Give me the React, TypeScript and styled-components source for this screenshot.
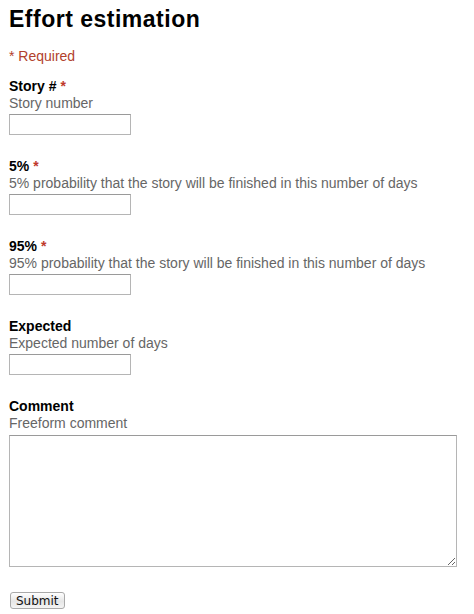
import React from "react";
import styled, { createGlobalStyle } from "styled-components";

const Global = createGlobalStyle`
  html, body { margin: 0; padding: 0; background: #fff; }
  body { font-family: "Liberation Sans", Arial, sans-serif; }
`;

const Page = styled.form`
  display: flex;
  flex-direction: column;
  padding: 8px 9px 0 9px;
  width: 448px;
`;

const Title = styled.h1`
  margin: 0;
  font-size: 23px;
  line-height: 22px;
  letter-spacing: 0.5px;
  font-weight: bold;
  color: #000;
`;

const RequiredNote = styled.div`
  margin-top: 18px;
  font-size: 14px;
  line-height: 17px;
  color: #b2412c;
`;

const Fields = styled.div`
  display: flex;
  flex-direction: column;
  gap: 23px;
  margin-top: 13px;
`;

const Field = styled.div`
  display: flex;
  flex-direction: column;
`;

const Label = styled.label`
  font-size: 14px;
  line-height: 17px;
  font-weight: bold;
  color: #000;
`;

const Star = styled.span`
  color: #c0392b;
  font-weight: bold;
  margin-left: 4px;
`;

const Help = styled.div`
  font-size: 14px;
  line-height: 17px;
  color: #666;
`;

const TextInput = styled.input`
  box-sizing: border-box;
  margin-top: 2px;
  width: 122px;
  height: 21px;
  border: 1px solid #b5b5b5;
  border-top-color: #9a9a9a;
  background: #fff;
  padding: 0 3px;
  font: 13px "Liberation Sans", Arial, sans-serif;
`;

const TextArea = styled.textarea`
  box-sizing: border-box;
  margin-top: 3px;
  width: 448px;
  height: 132px;
  border: 1px solid #b5b5b5;
  border-top-color: #9a9a9a;
  background: #fff;
  resize: both;
  font: 13px "Liberation Sans", Arial, sans-serif;
`;

const SubmitRow = styled.div`
  display: flex;
  margin-top: 25px;
  padding-left: 1px;
`;

const SubmitButton = styled.button`
  box-sizing: border-box;
  height: 17px;
  padding: 0 5px;
  border: 1px solid #a9a9a9;
  border-radius: 3px;
  background: linear-gradient(#ffffff, #e6e6e6 55%, #f4f4f4);
  font-family: "DejaVu Sans", sans-serif;
  font-size: 12px;
  line-height: 14px;
  color: #111;
`;

const fields = [
  { id: "story", label: "Story #", help: "Story number", required: true },
  { id: "p5", label: "5%", help: "5% probability that the story will be finished in this number of days", required: true },
  { id: "p95", label: "95%", help: "95% probability that the story will be finished in this number of days", required: true },
  { id: "expected", label: "Expected", help: "Expected number of days", required: false },
];

export default function App() {
  return (
    <>
      <Global />
      <Page onSubmit={(e) => e.preventDefault()}>
        <Title>Effort estimation</Title>
        <RequiredNote>* Required</RequiredNote>
        <Fields>
          {fields.map((f) => (
            <Field key={f.id}>
              <Label htmlFor={f.id}>
                {f.label}
                {f.required && <Star>*</Star>}
              </Label>
              <Help>{f.help}</Help>
              <TextInput id={f.id} type="text" />
            </Field>
          ))}
          <Field>
            <Label htmlFor="comment">Comment</Label>
            <Help>Freeform comment</Help>
            <TextArea id="comment" />
          </Field>
        </Fields>
        <SubmitRow>
          <SubmitButton type="submit">Submit</SubmitButton>
        </SubmitRow>
      </Page>
    </>
  );
}
